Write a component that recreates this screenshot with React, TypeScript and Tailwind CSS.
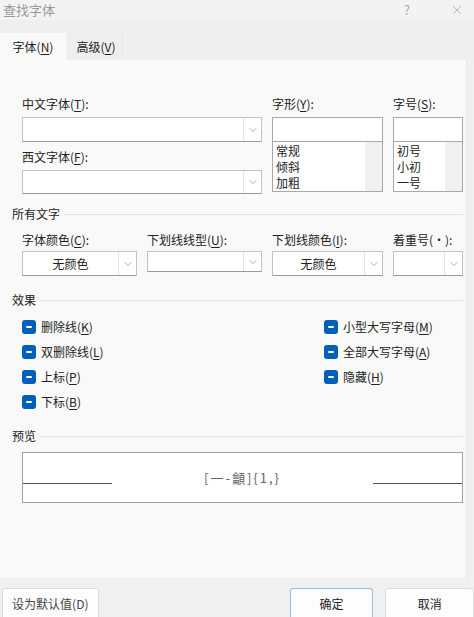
import { ChevronDown, X } from "lucide-react"

const font = { fontFamily: '"Noto Sans CJK SC", "Noto Sans", sans-serif' }

const Chevron = ({ h = "h-full" }: { h?: string }) => (
  <div className={`flex w-[18px] ${h} shrink-0 items-center justify-center border-l border-[#e3e3e3] bg-white`}>
    <ChevronDown className="h-3 w-3 text-[#777]" strokeWidth={1.2} />
  </div>
)

const Combo = ({ w, h = "h-[25px]", text }: { w: string; h?: string; text?: string }) => (
  <div className={`flex ${w} ${h} items-stretch border border-[#c2c2c2] border-b-[#9a9a9a] bg-white`}>
    <div className="flex flex-1 items-center justify-center text-[12px] text-[#222]">{text}</div>
    <Chevron />
  </div>
)

const Label = ({ children, className = "" }: { children: React.ReactNode; className?: string }) => (
  <div className={`h-[16px] text-[12px] leading-[16px] text-[#222] ${className}`}>{children}</div>
)

const U = ({ children }: { children: React.ReactNode }) => <span className="underline underline-offset-2">{children}</span>

const Section = ({ title }: { title: string }) => (
  <div className="flex items-center pl-3 pr-[3px]">
    <span className="text-[12px] leading-[16px] text-[#222]">{title}</span>
    <div className="ml-1 h-px flex-1 bg-[#e2e2e2]" />
  </div>
)

const ListBox = ({ w, items }: { w: string; items: string[] }) => (
  <div className={`flex flex-col ${w}`}>
    <div className="h-[25px] border border-[#a8a8a8] bg-white" />
    <div className="-mt-px flex h-[51px] border border-[#a8a8a8] bg-white">
      <div className="flex flex-1 flex-col pl-[3px] pt-px text-[12px] leading-[16px] text-[#222]">
        {items.map((i) => (
          <div key={i}>{i}</div>
        ))}
      </div>
      <div className="w-[17px] bg-[#f0f0f0]" />
    </div>
  </div>
)

const Check = ({ label }: { label: React.ReactNode }) => (
  <div className="flex h-[25px] items-center gap-[5px]">
    <div className="flex h-[14px] w-[14px] items-center justify-center rounded-[3px] bg-[#005fb8]">
      <div className="h-[2px] w-[6px] rounded bg-white" />
    </div>
    <span className="text-[12px] text-[#222]">{label}</span>
  </div>
)

export default function App() {
  return (
    <div className="h-[617px] w-[474px] overflow-hidden bg-[#f0f0f0]" style={font}>
      <div className="flex h-[20px] items-center justify-between bg-[#f3f3f3] pl-[3px] pr-[10px]">
        <span className="text-[13px] text-[#9a9a9a]">查找字体</span>
        <div className="flex items-center gap-[40px]">
          <span className="text-[13px] text-[#aaa]">?</span>
          <X className="h-[14px] w-[14px] text-[#888]" strokeWidth={1} />
        </div>
      </div>
      <div className="flex h-[40px] items-end bg-[#efefef]">
        <div className="flex h-[27px] w-[66px] items-center justify-center bg-[#f9f9f9] text-[12px] text-[#222]">
          字体(<U>N</U>)
        </div>
        <div className="flex h-[27px] w-[60px] items-center justify-center border-x border-[#f5f5f5] bg-[#eeeeee] text-[12px] text-[#222]">
          高级(<U>V</U>)
        </div>
      </div>
      <div className="h-[518px] w-[467px] border-r border-[#e6e6e6] bg-[#f9f9f9] pt-[36px]">
        <div className="flex gap-[10px] pl-[22px]">
          <div className="flex w-[240px] flex-col">
            <Label>中文字体(<U>T</U>):</Label>
            <div className="mt-[5px]">
              <Combo w="w-[240px]" />
            </div>
            <Label className="mt-[7px]">西文字体(<U>F</U>):</Label>
            <div className="mt-[5px]">
              <Combo w="w-[240px]" h="h-[24px]" />
            </div>
          </div>
          <div className="flex flex-col">
            <Label>字形(<U>Y</U>):</Label>
            <div className="mt-[5px]">
              <ListBox w="w-[111px]" items={["常规", "倾斜", "加粗"]} />
            </div>
          </div>
          <div className="flex flex-col">
            <Label>字号(<U>S</U>):</Label>
            <div className="mt-[5px]">
              <ListBox w="w-[70px]" items={["初号", "小初", "一号"]} />
            </div>
          </div>
        </div>

        <div className="mt-[12px]">
          <Section title="所有文字" />
        </div>
        <div className="mt-[10px] flex gap-[10px] pl-[22px]">
          <div className="flex flex-col">
            <Label>字体颜色(<U>C</U>):</Label>
            <div className="mt-[3px]">
              <Combo w="w-[115px]" text="无颜色" />
            </div>
          </div>
          <div className="flex flex-col">
            <Label>下划线线型(<U>U</U>):</Label>
            <div className="mt-[3px]">
              <Combo w="w-[115px]" h="h-[21px]" />
            </div>
          </div>
          <div className="flex flex-col">
            <Label>下划线颜色(<U>I</U>):</Label>
            <div className="mt-[3px]">
              <Combo w="w-[111px]" text="无颜色" />
            </div>
          </div>
          <div className="flex flex-col">
            <Label>着重号(·):</Label>
            <div className="mt-[3px]">
              <Combo w="w-[70px]" />
            </div>
          </div>
        </div>

        <div className="mt-[16px]">
          <Section title="效果" />
        </div>
        <div className="mt-[6px] flex pl-[22px]">
          <div className="flex w-[302px] flex-col">
            <Check label={<>删除线(<U>K</U>)</>} />
            <Check label={<>双删除线(<U>L</U>)</>} />
            <Check label={<>上标(<U>P</U>)</>} />
            <Check label={<>下标(<U>B</U>)</>} />
          </div>
          <div className="flex flex-col">
            <Check label={<>小型大写字母(<U>M</U>)</>} />
            <Check label={<>全部大写字母(<U>A</U>)</>} />
            <Check label={<>隐藏(<U>H</U>)</>} />
          </div>
        </div>

        <div className="mt-[14px]">
          <Section title="预览" />
        </div>
        <div className="ml-[22px] mt-[8px] flex h-[51px] w-[441px] items-end border border-[#a0a0a0] bg-white pb-[18px]">
          <div className="h-px w-[89px] bg-[#555]" />
          <div className="-mb-[2px] flex-1 text-center text-[13px] leading-[16px] tracking-[2px] text-[#666]">[一-龥]{"{1,}"}</div>
          <div className="h-px w-[89px] bg-[#555]" />
        </div>
      </div>
      <div className="flex pt-[10px]">
        <div className="ml-[2px] flex h-[32px] w-[98px] items-start justify-center rounded-[3px] border border-[#dcdcdc] bg-[#fdfdfd] pt-[6px] text-[12px] text-[#444]">
          设为默认值(D)
        </div>
        <div className="ml-[191px] flex h-[32px] w-[85px] items-start justify-center rounded-[3px] border border-[#9cbbe0] border-b-2 border-b-[#3a78c8] bg-[#fdfdfd] pt-[6px] text-[12px] text-[#222]">
          确定
        </div>
        <div className="ml-[12px] flex h-[32px] w-[90px] items-start justify-center rounded-[3px] border border-[#dcdcdc] bg-[#fdfdfd] pt-[6px] text-[12px] text-[#222]">
          取消
        </div>
      </div>
    </div>
  )
}
